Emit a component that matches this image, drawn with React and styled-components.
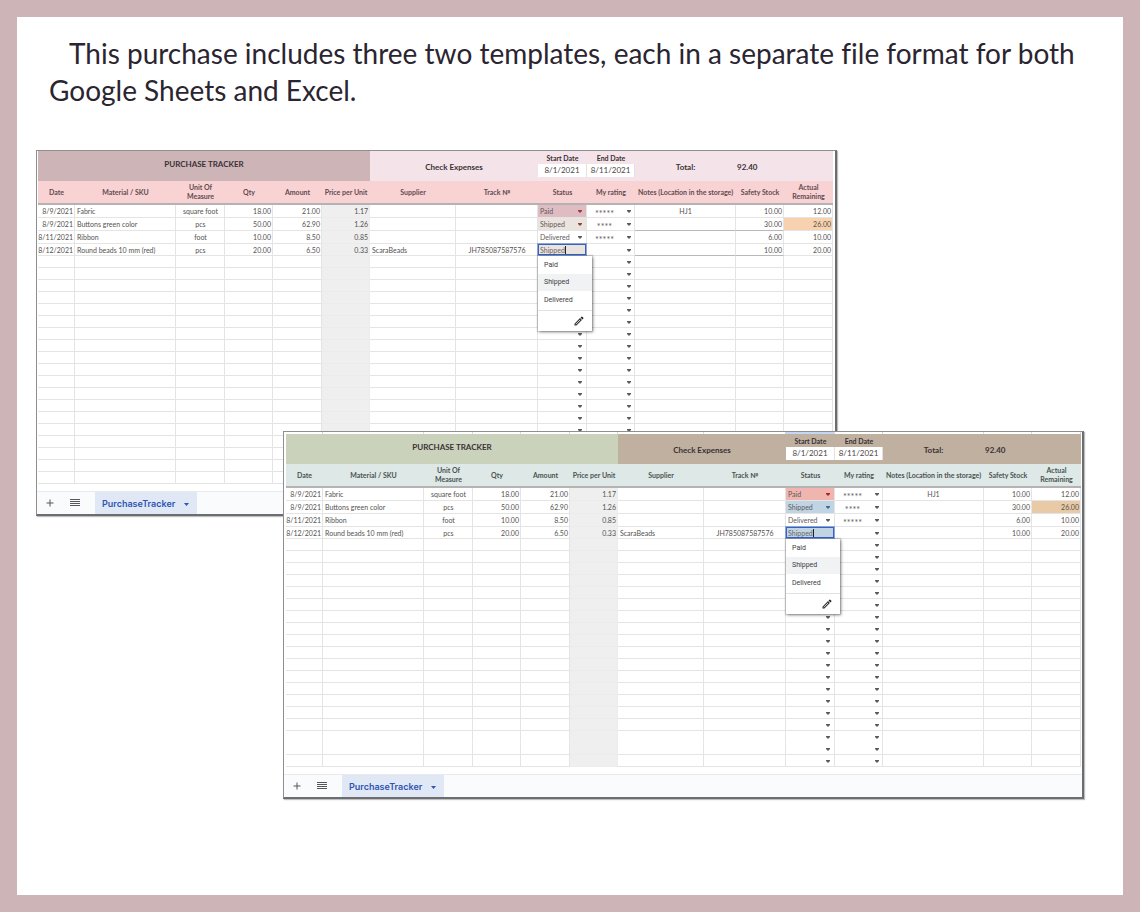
import React from "react";
import styled, { createGlobalStyle, css } from "styled-components";

const GlobalStyle = createGlobalStyle`
  *, *::before, *::after { box-sizing: border-box; }
  body {
    margin: 0;
    background: #cdb4b7;
    font-family: Lato, "Open Sans", sans-serif;
  }
`;

const Frame = styled.div`
  min-height: 100vh;
  padding: 17px;
  display: flex;
  background: #cdb4b7;
`;

const Board = styled.main`
  flex: 1;
  min-width: 0;
  padding-top: 18px;
  background: #fff;
`;

const Headline = styled.h1`
  margin: 0 20px 41px 32px;
  font: 400 28px/37px Lato, sans-serif;
  font-variant-ligatures: none;
  text-indent: 20px;
  color: #2a2530;
`;

const Sheet = styled.section`
  position: relative;
  border: 1px solid #8d8f90;
  border-right: 2px solid #6b6d70;
  border-bottom: 2px solid #6b6d70;
  box-shadow: 1px 1px 1px rgba(0, 0, 0, 0.25);
  background: #fff;
  margin: ${(p) => (p.$front ? "-85px 39px 0 266px" : "0 286px 0 19px")};
`;

const GridArea = styled.div`
  padding: ${(p) => (p.$front ? "0 1px 7px 2px" : "0 2px 7px 1px")};
`;

const Grid = styled.table`
  width: 100%;
  table-layout: fixed;
  border-collapse: separate;
  border-spacing: 0;
  font-size: 7px;
  line-height: 10px;
  color: #55524f;
`;

const StripCell = styled.td`
  height: 2px;
  padding: 0;
  border-right: 1px solid #d9d9d9;
  background: ${(p) => (p.$active ? "#c3d6f3" : "#fff")};
`;

const BandCell = styled.th`
  height: 30px;
  padding: ${(p) => (p.$top ? "0" : p.$title ? "0 0 4px" : "1px 1px 0")};
  vertical-align: ${(p) => (p.$top ? "top" : "middle")};
  text-align: ${(p) => p.$align || "center"};
  background: ${(p) => p.$bg};
  font-size: 8px;
  font-weight: 700;
  white-space: nowrap;
  color: #3a3136;
`;

const DateLabel = styled.label`
  display: block;
  height: 13px;
  font-size: 7px;
  line-height: 14px;
`;

const DateInput = styled.input`
  display: block;
  width: 100%;
  height: 13px;
  padding: 0;
  border: 0;
  border-right: 1px solid #e6e0de;
  background: #fff;
  font: 400 8px/13px Lato, sans-serif;
  text-align: center;
  color: #4b4648;
`;

const HeadCell = styled.th`
  height: 24px;
  padding: 0;
  border-bottom: 2px solid #b4b2b2;
  background: ${(p) => p.$bg};
  font-size: 7px;
  font-weight: 700;
  line-height: 9px;
  white-space: ${(p) => (p.$wrap ? "normal" : "nowrap")};
  color: ${(p) => p.$ink};
`;

const Cell = styled.td`
  height: ${(p) => (p.$tall ? 13 : 12)}px;
  padding: ${(p) => (p.$first ? "0 1px 0 0" : "0 1px 0 2px")};
  border-right: 1px solid #e4e4e4;
  border-bottom: 1px solid ${(p) => (p.$ruled ? "#b9b9b9" : "#e4e4e4")};
  text-align: ${(p) => p.$align || "left"};
  white-space: nowrap;
  background: ${(p) => p.$bg || "#fff"};
  ${(p) => p.$shaded && css`
    background: #efefef;
    border-color: #ececec;
  `}
  ${(p) => p.$open && css`border-bottom-color: transparent;`}
`;

const PickCell = styled(Cell)`
  position: relative;
  padding: 0;
`;

const Picker = styled.div`
  display: grid;
  align-items: center;
  & > * { grid-area: 1 / 1; }
`;

const PickerSelect = styled.select`
  width: 100%;
  height: 11px;
  padding: ${(p) => (p.$rating ? "2px 12px 0 0" : "0 12px 0 2px")};
  border: 0;
  appearance: none;
  background: transparent;
  font: 400 ${(p) => (p.$rating ? 9 : 7)}px/11px Lato, sans-serif;
  text-align: ${(p) => (p.$rating ? "center" : "left")};
  color: #5f5a5c;
`;

const PickerArrow = styled.svg`
  width: 4px;
  height: 3px;
  margin-right: ${(p) => (p.$rating ? 3 : 4)}px;
  margin-top: ${(p) => (p.$tall ? 0 : 2)}px;
  justify-self: end;
  pointer-events: none;
  fill: ${(p) => p.$tone || "#5c5c5c"};
`;

const Editor = styled.div`
  display: flex;
  align-items: center;
  height: 11px;
  padding-left: 2px;
  background: ${(p) => p.$bg};
  box-shadow: inset 0 0 0 1px #3563c4, 0 0 0 1px rgba(53, 99, 196, 0.5);
`;

const EditorInput = styled.input`
  field-sizing: content;
  height: 10px;
  padding: 0;
  border: 0;
  outline: 0;
  background: transparent;
  font: 400 7px/10px Lato, sans-serif;
  color: #6b6668;
`;

const Caret = styled.span`
  width: 1px;
  height: 8px;
  background: #222;
`;

const Menu = styled.ul`
  position: absolute;
  z-index: 1;
  top: 12px;
  left: 0;
  width: 54px;
  height: 75px;
  margin: 0;
  padding: 1px 0 0;
  list-style: none;
  background: #fff;
  box-shadow: 0 0 1px 1px rgba(0, 0, 0, 0.12), 1px 1px 3px rgba(0, 0, 0, 0.45);
`;

const MenuItem = styled.li`
  border-bottom: ${(p) => (p.$last ? "1px solid #e2e2e2" : "0")};
`;

const MenuButton = styled.button`
  display: block;
  width: 100%;
  height: ${(p) => (p.$last ? 19 : 17)}px;
  padding: 0 6px;
  border: 0;
  background: ${(p) => (p.$active ? "#f0f2f4" : "transparent")};
  font: 400 7px/17px Roboto, sans-serif;
  text-align: left;
  color: #3c4043;
`;

const EditRow = styled.li`
  display: flex;
  justify-content: flex-end;
  padding: 4px 7px 0 0;
`;

const IconButton = styled.button`
  display: flex;
  align-items: center;
  justify-content: center;
  width: ${(p) => p.$size}px;
  height: ${(p) => p.$size}px;
  padding: 0;
  border: 0;
  background: transparent;
  color: #55585b;
`;

const TabBar = styled.nav`
  display: flex;
  align-items: center;
  height: 23px;
  padding-left: 6px;
  gap: 11px;
  border-top: 1px solid #e8eaed;
  background: #f9fbfd;
`;

const Tab = styled.button`
  display: flex;
  align-items: center;
  gap: 9px;
  height: 22px;
  margin-left: 2px;
  padding: 2px 8px 0 7px;
  border: 0;
  background: #e0e7f5;
  font: 600 9px/20px Inter, sans-serif;
  color: #2f55b4;
`;

const COLUMNS = [
  ["Date", 37], ["Material / SKU", 101], ["Unit Of Measure", 49], ["Qty", 48],
  ["Amount", 49], ["Price per Unit", 48], ["Supplier", 86], ["Track №", 82],
  ["Status", 49], ["My rating", 48], ["Notes (Location in the storage)", 101],
  ["Safety Stock", 48], ["Actual Remaining", 49],
];

const ROWS = [
  ["8/9/2021", "Fabric", "square foot", "18.00", "21.00", "1.17", "", "", "Paid", "*****", "HJ1", "10.00", "12.00"],
  ["8/9/2021", "Buttons green color", "pcs", "50.00", "62.90", "1.26", "", "", "Shipped", "****", "", "30.00", "26.00"],
  ["8/11/2021", "Ribbon", "foot", "10.00", "8.50", "0.85", "", "", "Delivered", "*****", "", "6.00", "10.00"],
  ["8/12/2021", "Round beads 10 mm (red)", "pcs", "20.00", "6.50", "0.33", "ScaraBeads", "JH785087587576", "Shipped", "", "", "10.00", "20.00"],
  ...Array.from({ length: 19 }, () => Array(13).fill("")),
];

const ALIGN = ["right", "left", "center", "right", "right", "right", "left", "center", "left", "center", "center", "right", "right"];
const STATUSES = ["Paid", "Shipped", "Delivered"];
const RATINGS = ["*", "**", "***", "****", "*****"];

const ROSE = {
  name: "Rose purchase tracker",
  title: "#cdb4b7", summary: "#f4e4e9", head: "#f9d2d3", ink: "#5f4c50",
  Paid: "#dfbcc1", Shipped: "#ebe3de", low: "#f8d2ae",
  paidArrow: "#9c3a40", shippedArrow: "#8a4a3a", ruled: [1, 3],
};

const SAGE = {
  name: "Sage purchase tracker",
  title: "#cbd2bb", summary: "#bfb0a0", head: "#dee8e6", ink: "#4a5352",
  Paid: "#efb5ae", Shipped: "#c0d4e3", low: "#e8caa6",
  paidArrow: "#a8262a", shippedArrow: "#3a6d94", ruled: [], openRow: 21,
};

function StatusEditor({ value, theme }) {
  return (
    <>
      <Editor $bg={theme.Shipped}>
        <EditorInput aria-label="Status" defaultValue={value} />
        <Caret />
      </Editor>
      <Menu>
        {STATUSES.map((s, i) => (
          <MenuItem key={s} $last={i === 2}>
            <MenuButton type="button" $active={s === value} $last={i === 2}>{s}</MenuButton>
          </MenuItem>
        ))}
        <EditRow>
          <IconButton type="button" $size={12} aria-label="Edit options">
            <svg width="12" height="12" viewBox="0 0 24 24" fill="#222" aria-hidden="true">
              <path d="M3 17.250V21h3.750L17.810 9.940l-3.750-3.750L3 17.250zM5.920 19H5v-.92l9.060-9.060.92.92L5.920 19zM20.710 5.630l-2.340-2.340c-.2-.2-.45-.29-.71-.29s-.51.1-.7.29l-1.830 1.830 3.750 3.750 1.830-1.830c.39-.39.39-1.020 0-1.410z" />
            </svg>
          </IconButton>
        </EditRow>
      </Menu>
    </>
  );
}

function Choice({ label, value, options, tone, rating, tall }) {
  return (
    <Picker>
      <PickerSelect aria-label={label} defaultValue={value} $rating={rating}>
        <option value=""></option>
        {options.map((o) => <option key={o}>{o}</option>)}
      </PickerSelect>
      <PickerArrow viewBox="0 0 4 3" $tone={tone} $rating={rating} $tall={tall} aria-hidden="true">
        <path d="M0 0h4v1L2 3 0 1z" />
      </PickerArrow>
    </Picker>
  );
}

function DataRow({ values, index, theme }) {
  const tall = index < 3;
  const shared = { $tall: tall, $open: theme.openRow === index + 1 };
  return (
    <tr>
      {values.map((value, c) => {
        if (c === 8) {
          const editing = index === 3;
          const tinted = value && value !== "Delivered";
          return (
            <PickCell key={c} {...shared} $bg={tinted ? theme[value] : undefined}>
              {editing ? (
                <StatusEditor value={value} theme={theme} />
              ) : (
                <Choice
                  label={`Status, row ${index + 1}`}
                  value={value}
                  options={STATUSES}
                  tall={tall}
                  tone={value === "Paid" ? theme.paidArrow : value === "Shipped" ? theme.shippedArrow : undefined}
                />
              )}
            </PickCell>
          );
        }
        if (c === 9) {
          return (
            <PickCell key={c} {...shared}>
              <Choice label={`Rating, row ${index + 1}`} value={value} options={RATINGS} tall={tall} rating />
            </PickCell>
          );
        }
        return (
          <Cell
            key={c}
            {...shared}
            $align={ALIGN[c]}
            $first={c === 0}
            $shaded={c === 5}
            $bg={c === 12 && index === 1 ? theme.low : undefined}
            $ruled={(c === 10 || c === 11) && theme.ruled.includes(index)}
          >
            {value}
          </Cell>
        );
      })}
    </tr>
  );
}

function Tracker({ theme, front, id }) {
  return (
    <Sheet $front={front} aria-label={theme.name}>
      <GridArea $front={front}>
        <Grid>
          <colgroup>
            {COLUMNS.map(([name, width]) => <col key={name} width={width} />)}
          </colgroup>
          <thead>
            {front && (
              <tr>
                {COLUMNS.map(([name], c) => <StripCell key={name} $active={c === 8} />)}
              </tr>
            )}
            <tr>
              <BandCell colSpan={6} $title $bg={theme.title}>PURCHASE TRACKER</BandCell>
              <BandCell colSpan={2} $bg={theme.summary}>Check Expenses</BandCell>
              <BandCell $top $bg={theme.summary}>
                <DateLabel htmlFor={`${id}-start`}>Start Date</DateLabel>
                <DateInput id={`${id}-start`} defaultValue="8/1/2021" />
              </BandCell>
              <BandCell $top $bg={theme.summary}>
                <DateLabel htmlFor={`${id}-end`}>End Date</DateLabel>
                <DateInput id={`${id}-end`} defaultValue="8/11/2021" />
              </BandCell>
              <BandCell $bg={theme.summary}>Total:</BandCell>
              <BandCell colSpan={2} $align="left" $bg={theme.summary}>92.40</BandCell>
            </tr>
            <tr>
              {COLUMNS.map(([name], c) => (
                <HeadCell key={name} scope="col" $bg={theme.head} $ink={theme.ink} $wrap={c === 2 || c === 12}>{name}</HeadCell>
              ))}
            </tr>
          </thead>
          <tbody>
            {ROWS.map((values, i) => <DataRow key={i} values={values} index={i} theme={theme} />)}
          </tbody>
        </Grid>
      </GridArea>
      <TabBar>
        <IconButton type="button" $size={14} aria-label="Add sheet">
          <svg width="8" height="8" viewBox="0 0 8 8" stroke="currentColor" aria-hidden="true">
            <path d="M4 .5v7M.5 4h7" />
          </svg>
        </IconButton>
        <IconButton type="button" $size={14} aria-label="All sheets">
          <svg width="10" height="8" viewBox="0 0 10 8" stroke="currentColor" aria-hidden="true">
            <path d="M0 .5h10M0 2.500h10M0 4.500h10M0 6.500h10" />
          </svg>
        </IconButton>
        <Tab type="button">
          PurchaseTracker
          <svg width="5" height="3" viewBox="0 0 5 3" fill="currentColor" aria-hidden="true">
            <path d="M0 0h5L2.500 3z" />
          </svg>
        </Tab>
      </TabBar>
    </Sheet>
  );
}

export default function App() {
  return (
    <>
      <GlobalStyle />
      <Frame>
        <Board>
          <Headline>
            This purchase includes three two templates, each in a separate file format for both Google Sheets and Excel.
          </Headline>
          <Tracker id="rose" theme={ROSE} />
          <Tracker id="sage" theme={SAGE} front />
        </Board>
      </Frame>
    </>
  );
}
